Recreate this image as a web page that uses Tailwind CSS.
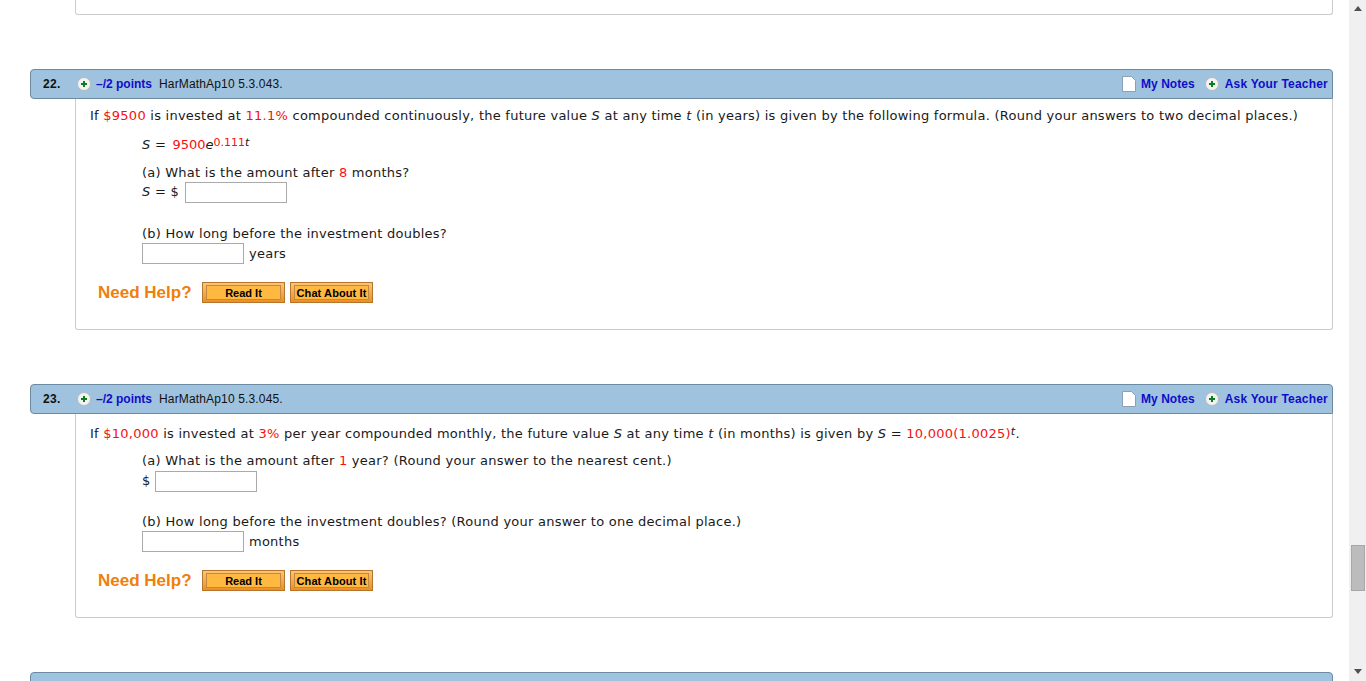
<!DOCTYPE html>
<html><head><meta charset="utf-8"><script src="https://cdn.jsdelivr.net/npm/@tailwindcss/browser@4"></script></head>
<body class="m-0 overflow-hidden bg-white">
<div class="flex h-[681px] w-[1366px] overflow-hidden font-['DejaVu_Sans',sans-serif] text-[13px] tracking-[0.25px] text-[#1a1a1a]">
  <main class="w-[1349px] h-[681px] overflow-hidden pl-[30px] pr-[16px]">
    <div class="ml-[45px] h-[15px] border border-t-0 border-[#cccccc] rounded-b-[3px]"></div>

    <!-- 22 -->
    <section class="mt-[54px]">
      <header class="h-[30px] flex items-center bg-[#9fc2df] border border-[#6d8aa3] rounded-t-[4px] rounded-bl-[4px] font-['Liberation_Sans',sans-serif] text-[12px] tracking-normal text-[#111]">
        <b class="w-[46px] pl-[12px] tracking-[0.3px]">22.</b>
        <svg class="w-[14px] h-[14px]" viewBox="0 0 14 14"><circle cx="7" cy="7" r="6.5" fill="#f2f2f2" stroke="#bbb"/><path d="M7 4v6M4 7h6" stroke="#0a7d1c" stroke-width="2"/></svg>
        <b class="ml-[5px] text-[#0e0ec8]">–/2 points</b>
        <span class="ml-[7px] tracking-[0.15px]">HarMathAp10 5.3.043.</span>
        <div class="ml-auto flex items-center pr-[4px]">
          <svg class="w-[14px] h-[16px]" viewBox="0 0 14 16"><path d="M.5.5h9l4 4v11H.5z" fill="#fff" stroke="#8aa0b5"/></svg>
          <b class="ml-[5px] tracking-[0.05px] text-[#0e0ec8]">My Notes</b>
          <svg class="ml-[10px] w-[14px] h-[14px]" viewBox="0 0 14 14"><circle cx="7" cy="7" r="6.5" fill="#f2f2f2" stroke="#bbb"/><path d="M7 4v6M4 7h6" stroke="#0a7d1c" stroke-width="2"/></svg>
          <b class="ml-[6px] tracking-[0.2px] text-[#0e0ec8]">Ask Your Teacher</b>
        </div>
      </header>
      <div class="ml-[45px] h-[231px] border border-t-0 border-[#cccccc] rounded-b-[3px] pl-[14px]">
        <p class="mt-0 pt-[9px] h-[26px] leading-[16px] whitespace-nowrap">If <span class="text-[#f70f0f]">$9500</span> is invested at <span class="text-[#f70f0f]">11.1%</span> compounded continuously, the future value <i>S</i> at any time <i>t</i> (in years) is given by the following formula. (Round your answers to two decimal places.)</p>
        <div class="pl-[52px]">
          <p class="mt-[12px] h-[16px] leading-[16px] whitespace-nowrap"><i>S</i> = <span class="ml-[2px] tracking-normal text-[#f70f0f]">9500</span><i class="tracking-normal">e</i><sup class="relative top-[-3px] text-[11px] tracking-normal leading-none align-baseline"><span class="text-[#f70f0f]">0.111</span><i>t</i></sup></p>
          <p class="mt-[12px] h-[16px] leading-[16px]">(a) What is the amount after <span class="text-[#f70f0f]">8</span> months?</p>
          <div class="flex items-center h-[22px]"><span><i>S</i> = $</span><span class="ml-[6px] block w-[102px] h-[21px] border border-[#aaaaaa] bg-white"></span></div>
          <p class="mt-[23px] h-[16px] leading-[16px]">(b) How long before the investment doubles?</p>
          <div class="flex items-center h-[22px]"><span class="block w-[102px] h-[21px] border border-[#aaaaaa] bg-white"></span><span class="ml-[5px] pt-[1px]">years</span></div>
        </div>
        <div class="mt-[17px] flex items-center h-[22px] pl-[8px] tracking-normal">
          <span class="pt-[1px] font-['Liberation_Sans',sans-serif] font-bold text-[17px] text-[#ee7f0a] w-[104px]">Need Help?</span>
          <button class="w-[83px] h-[21px] pt-[2px] px-[3px] bg-linear-to-b from-[#f9c57c] to-[#ef8e1e] border border-[#b5752c] flex"><span class="w-full h-[15px] pt-[2px] flex items-center justify-center bg-[#ffb840] border border-[#c08a40] font-['Liberation_Sans',sans-serif] font-bold text-[11px] text-black">Read It</span></button>
          <button class="ml-[5px] w-[83px] h-[21px] pt-[2px] px-[3px] bg-linear-to-b from-[#f9c57c] to-[#ef8e1e] border border-[#b5752c] flex"><span class="w-full h-[15px] pt-[2px] flex items-center justify-center bg-[#ffb840] border border-[#c08a40] font-['Liberation_Sans',sans-serif] font-bold text-[11px] tracking-[0.1px] text-black whitespace-nowrap">Chat About It</span></button>
        </div>
      </div>
    </section>

    <!-- 23 -->
    <section class="mt-[54px]">
      <header class="h-[30px] flex items-center bg-[#9fc2df] border border-[#6d8aa3] rounded-t-[4px] rounded-bl-[4px] font-['Liberation_Sans',sans-serif] text-[12px] tracking-normal text-[#111]">
        <b class="w-[46px] pl-[12px] tracking-[0.3px]">23.</b>
        <svg class="w-[14px] h-[14px]" viewBox="0 0 14 14"><circle cx="7" cy="7" r="6.5" fill="#f2f2f2" stroke="#bbb"/><path d="M7 4v6M4 7h6" stroke="#0a7d1c" stroke-width="2"/></svg>
        <b class="ml-[5px] text-[#0e0ec8]">–/2 points</b>
        <span class="ml-[7px] tracking-[0.15px]">HarMathAp10 5.3.045.</span>
        <div class="ml-auto flex items-center pr-[4px]">
          <svg class="w-[14px] h-[16px]" viewBox="0 0 14 16"><path d="M.5.5h9l4 4v11H.5z" fill="#fff" stroke="#8aa0b5"/></svg>
          <b class="ml-[5px] tracking-[0.05px] text-[#0e0ec8]">My Notes</b>
          <svg class="ml-[10px] w-[14px] h-[14px]" viewBox="0 0 14 14"><circle cx="7" cy="7" r="6.5" fill="#f2f2f2" stroke="#bbb"/><path d="M7 4v6M4 7h6" stroke="#0a7d1c" stroke-width="2"/></svg>
          <b class="ml-[6px] tracking-[0.2px] text-[#0e0ec8]">Ask Your Teacher</b>
        </div>
      </header>
      <div class="ml-[45px] h-[204px] border border-t-0 border-[#cccccc] rounded-b-[3px] pl-[14px]">
        <p class="pt-[12px] h-[28px] leading-[16px] whitespace-nowrap">If <span class="text-[#f70f0f]">$10,000</span> is invested at <span class="text-[#f70f0f]">3%</span> per year compounded monthly, the future value <i>S</i> at any time <i>t</i> (in months) is given by <i>S</i> = <span class="text-[#f70f0f]">10,000(1.0025)</span><sup class="relative top-[-3px] text-[11px] leading-none align-baseline"><i>t</i></sup>.</p>
        <div class="pl-[52px]">
          <p class="mt-[11px] h-[16px] leading-[16px]">(a) What is the amount after <span class="text-[#f70f0f]">1</span> year? (Round your answer to the nearest cent.)</p>
          <div class="mt-[1px] flex items-center h-[22px]"><span>$</span><span class="ml-[4px] block w-[102px] h-[21px] border border-[#aaaaaa] bg-white"></span></div>
          <p class="mt-[22px] h-[16px] leading-[16px]">(b) How long before the investment doubles? (Round your answer to one decimal place.)</p>
          <div class="flex items-center h-[22px]"><span class="block w-[102px] h-[21px] border border-[#aaaaaa] bg-white"></span><span class="ml-[5px] pt-[1px]">months</span></div>
        </div>
        <div class="mt-[17px] flex items-center h-[22px] pl-[8px] tracking-normal">
          <span class="pt-[1px] font-['Liberation_Sans',sans-serif] font-bold text-[17px] text-[#ee7f0a] w-[104px]">Need Help?</span>
          <button class="w-[83px] h-[21px] pt-[2px] px-[3px] bg-linear-to-b from-[#f9c57c] to-[#ef8e1e] border border-[#b5752c] flex"><span class="w-full h-[15px] pt-[2px] flex items-center justify-center bg-[#ffb840] border border-[#c08a40] font-['Liberation_Sans',sans-serif] font-bold text-[11px] text-black">Read It</span></button>
          <button class="ml-[5px] w-[83px] h-[21px] pt-[2px] px-[3px] bg-linear-to-b from-[#f9c57c] to-[#ef8e1e] border border-[#b5752c] flex"><span class="w-full h-[15px] pt-[2px] flex items-center justify-center bg-[#ffb840] border border-[#c08a40] font-['Liberation_Sans',sans-serif] font-bold text-[11px] tracking-[0.1px] text-black whitespace-nowrap">Chat About It</span></button>
        </div>
      </div>
    </section>

    <section class="mt-[54px]">
      <header class="h-[30px] flex items-center bg-[#9fc2df] border border-[#6d8aa3] rounded-t-[4px]"></header>
    </section>
  </main>
  <aside class="w-[17px] h-[681px] bg-[#f0f0f0] flex flex-col items-center">
    <svg class="mt-[6px] w-[8px] h-[5px]" viewBox="0 0 8 5"><path d="M4 0l4 5H0z" fill="#505050"/></svg>
    <div class="mt-[534px] w-[14px] h-[46px] bg-[#bcbcbc] border border-[#a8a8a8]"></div>
    <svg class="mt-auto mb-[7px] w-[8px] h-[5px]" viewBox="0 0 8 5"><path d="M0 0h8L4 5z" fill="#505050"/></svg>
  </aside>
</div>
</body></html>
